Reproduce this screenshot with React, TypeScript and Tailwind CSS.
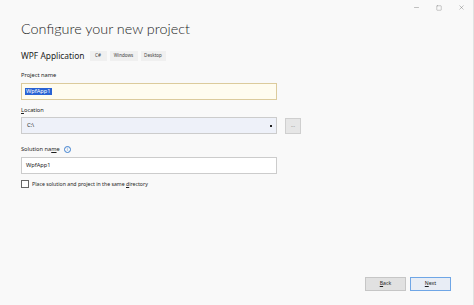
import { Minus, Square, X } from 'lucide-react'

const TAGS = [
  { label: 'C#', w: 'w-[17px]' },
  { label: 'Windows', w: 'w-[28px]' },
  { label: 'Desktop', w: 'w-[25px]' },
]

function Label({ children }: { children: React.ReactNode }) {
  return <div className="text-[5.7px] leading-[7px] h-[7px] text-[#1e1e1e]">{children}</div>
}

export default function App() {
  return (
    <div
      className="w-[474px] h-[305px] bg-[#f9f9f9] flex flex-col overflow-hidden border-r border-[#e2e2e2]"
      style={{ fontFamily: '"Noto Sans", "Open Sans", sans-serif' }}
    >
      {/* title bar */}
      <div className="h-[15px] flex justify-end items-center gap-[16px] pr-[8px] text-[#555]">
        <Minus size={7} strokeWidth={1.2} />
        <Square size={6} strokeWidth={1.2} />
        <X size={7} strokeWidth={1.2} />
      </div>

      <div className="flex flex-col px-[21px]">
        <h1
          className="mt-[4px] h-[19px] text-[14.4px] leading-[19px] font-light text-[#1e1e1e]"
          style={{ fontFamily: 'Lato, "Noto Sans", sans-serif' }}
        >
          Configure your new project
        </h1>

        <div className="flex items-center mt-[12px] h-[11px]">
          <span className="text-[8.4px] leading-[10px] text-[#1e1e1e] mr-[5px]">WPF Application</span>
          {TAGS.map(t => (
            <span
              key={t.label}
              className={`${t.w} h-[10px] flex items-center justify-center text-[4.6px] text-[#444] bg-[#f0f0f0] mr-[3px] leading-none`}
            >
              {t.label}
            </span>
          ))}
        </div>

        <div className="mt-[11px]">
          <Label>Project name</Label>
          <div className="mt-[4px] w-[256px] h-[17px] border border-[#dccb9c] bg-[#fffcef] flex items-center px-[3px]">
            <span className="text-[5.7px] leading-[7px] bg-[#2a63d4] text-white px-[1px]">WpfApp1</span>
          </div>
        </div>

        <div className="mt-[7px]">
          <Label>
            <span className="underline">L</span>ocation
          </Label>
          <div className="mt-[3px] flex items-center">
            <div className="w-[256px] h-[17px] border border-[#cccccc] bg-[#eef1f9] flex items-center justify-between pl-[5px] pr-[4px]">
              <span className="text-[5.7px] text-[#1e1e1e]">C:\</span>
              <span className="w-[2px] h-[2px] bg-[#222]" />
            </div>
            <div className="ml-[8px] w-[16px] h-[16px] border border-[#cfcfcf] bg-[#e6e6e6] flex items-center justify-center text-[5px] text-[#888] leading-none">
              ...
            </div>
          </div>
        </div>

        <div className="mt-[12px]">
          <div className="flex items-center gap-[4px] h-[7px]">
            <Label>
              Solution na<span className="underline">m</span>e
            </Label>
            <span className="w-[7px] h-[7px] rounded-full border border-[#3c7fcf] text-[#3c7fcf] text-[4.5px] leading-none flex items-center justify-center">
              i
            </span>
          </div>
          <div className="mt-[4px] w-[256px] h-[17px] border border-[#cccccc] bg-white flex items-center px-[4px]">
            <span className="text-[5.7px] text-[#1e1e1e]">WpfApp1</span>
          </div>
        </div>

        <div className="mt-[6px] flex items-center gap-[3px] h-[8px]">
          <span className="w-[8px] h-[8px] border border-[#666] bg-white" />
          <span className="text-[5.2px] leading-[7px] text-[#1e1e1e]">
            Place solution and project in the same <span className="underline">d</span>irectory
          </span>
        </div>
      </div>

      <div className="flex-1" />

      <div className="flex justify-end gap-[4px] pr-[22px] pb-[14px]">
        <button className="w-[41px] h-[14px] bg-[#e1e1e1] border border-[#c6c6c6] text-[5.2px] text-[#1e1e1e] leading-none">
          <span className="underline">B</span>ack
        </button>
        <button className="w-[41px] h-[14px] bg-[#e8edf5] border border-[#6fa6e6] text-[5.2px] text-[#1e1e1e] leading-none">
          <span className="underline">N</span>ext
        </button>
      </div>
    </div>
  )
}
